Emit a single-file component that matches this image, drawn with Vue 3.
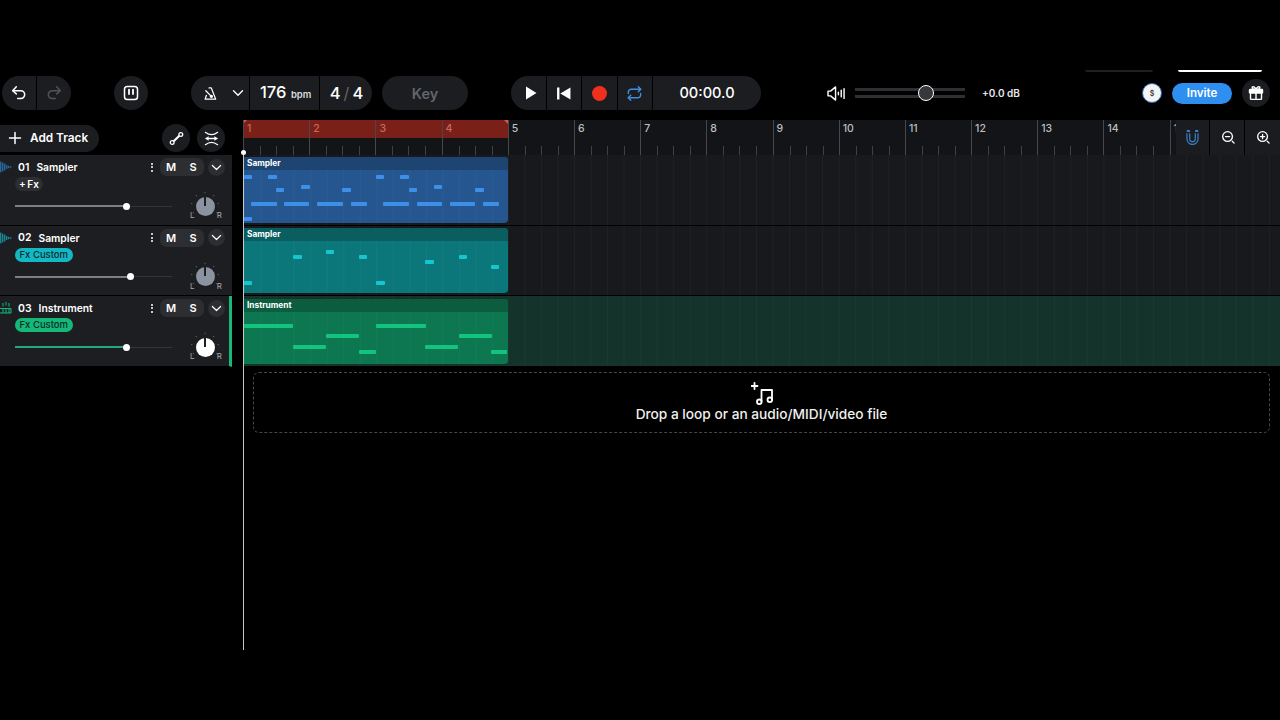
<script setup>
const BAR = 66.2

const bars = Array.from({ length: 16 }, (_, i) => i + 1)

const tracks = [
  {
    num: '01', name: 'Sampler', kind: 'wave', color: '#2f86d8', noteColor: '#3d8fe8', fx: '+ Fx', fxColor: '', level: 111,
    fill: '#7d7f84', knob: '#8b92a0', body: '#25568f', head: '#1e4572', lane: 'blue', top: 157.3,
    notes: [
      [243.5, 175, 8.5], [268, 175, 8.7], [376, 175, 8.3], [400, 175, 8.7],
      [301, 185, 8.5], [433.7, 185, 8.5],
      [275.7, 188, 8.5], [342.3, 188, 8.7], [408.7, 188, 8.8], [475, 188, 9],
      [251.3, 202, 25.4], [284.3, 202, 25], [317, 202, 26.3], [350.7, 202, 16.6],
      [383.3, 202, 25.7], [417, 202, 25.3], [450, 202, 25], [483, 202, 16.3],
      [243.5, 217, 8.2],
    ],
  },
  {
    num: '02', name: 'Sampler', kind: 'wave', color: '#1bb6c4', noteColor: '#16c6cf', fx: 'Fx Custom', fxColor: '#12b9c4', level: 115,
    fill: '#7d7f84', knob: '#8b92a0', body: '#0c777b', head: '#0b5e5f', lane: 'blue', top: 228,
    notes: [
      [325.7, 250, 8.6],
      [292.7, 255, 9], [358.7, 255, 8.6], [458.7, 255, 8.6],
      [425, 260, 8.7], [491.3, 265, 8],
      [243.5, 281, 8.2], [376, 281, 8.7],
    ],
  },
  {
    num: '03', name: 'Instrument', kind: 'piano', color: '#16b87a', noteColor: '#12c47e', fx: 'Fx Custom', fxColor: '#14b877', level: 111,
    fill: '#24a878', knob: '#ffffff', body: '#0d7752', head: '#0c5c40', lane: 'green', top: 298.7, active: true,
    notes: [
      [243.5, 324, 49.2], [376, 324, 49.7],
      [325.7, 334.5, 33], [458.7, 334.5, 33],
      [292.7, 345, 33], [425, 345, 32.7],
      [358.7, 350, 17.3], [491.3, 350, 16],
    ],
  },
]

// each note is [page x, page y, width]; the clip's left edge sits at x=244
function noteStyle(n, t) {
  return { left: n[0] - 244 + 'px', top: n[1] - t.top + 'px', width: n[2] + 'px', background: t.noteColor }
}

// dial marks round the pan knob
const dialTicks = [-120, -80, -40, 0, 40, 80, 120]
</script>

<template>
  <div class="page">
    <div class="top-mark top-mark--dim"></div>
    <div class="top-mark top-mark--white"></div>

    <header class="toolbar">
      <div class="pill undo">
        <button class="seg seg--undo">
          <svg viewBox="0 0 20 20" width="18" height="18" fill="none" stroke="#fff" stroke-width="1.7" stroke-linecap="round" stroke-linejoin="round"><path d="M7 3 3 7.500l4 3.500" /><path d="M3.500 7.500h8.500a4.300 4.300 0 0 1 0 8.600H8.500" /></svg>
        </button>
        <button class="seg seg--redo">
          <svg viewBox="0 0 20 20" width="18" height="18" fill="none" stroke="#505357" stroke-width="1.7" stroke-linecap="round" stroke-linejoin="round"><path d="M13 3l4 4.500-4 3.500" /><path d="M16.500 7.500H8a4.300 4.300 0 0 0 0 8.600h3.500" /></svg>
        </button>
      </div>

      <button class="round pause">
        <svg viewBox="0 0 16 16" width="16" height="16" fill="none" stroke="#fff" stroke-width="1.500"><rect x="1.500" y="1.500" width="13" height="13" rx="2.800" /><path d="M6 4.600v4.400M10 4.600v4.400" stroke-width="1.800" stroke-linecap="round" /></svg>
      </button>

      <div class="pill tempo">
        <div class="tempo__metro">
          <svg viewBox="0 0 16 16" width="15" height="15" fill="none" stroke="#fff" stroke-width="1.400" stroke-linejoin="round" stroke-linecap="round"><path d="M6.500 2h2.300l4.700 12H2.300l1.300-4" /><path d="M8.400 10.500 3 5" /><circle cx="8.900" cy="11" r="1.100" fill="#fff" /></svg>
          <svg viewBox="0 0 12 12" width="12" height="12" fill="none" stroke="#fff" stroke-width="1.400" stroke-linecap="round" stroke-linejoin="round"><path d="M1.500 3.800 6 8.200l4.500-4.400" /></svg>
        </div>
        <div class="tempo__bpm"><span class="big">176</span> <span class="bpm">bpm</span></div>
        <div class="tempo__sig"><span class="big">4</span><span class="slash">/</span><span class="big">4</span></div>
      </div>

      <div class="pill key">Key</div>

      <div class="pill transport">
        <button class="seg seg--t">
          <svg viewBox="0 0 14 14" width="14" height="14" fill="#fff"><path d="M2 .500v13l10.500-6.500z" /></svg>
        </button>
        <button class="seg seg--t">
          <svg viewBox="0 0 14 14" width="15" height="15" fill="#fff"><path d="M1 1.500h2.200v11H1zM13.500 1.500v11L4 7z" /></svg>
        </button>
        <button class="seg seg--t">
          <span class="rec"></span>
        </button>
        <button class="seg seg--t">
          <svg viewBox="0 0 18 18" width="17" height="17" fill="none" stroke="#3f8fe0" stroke-width="1.500" stroke-linecap="round" stroke-linejoin="round"><path d="M2.500 9V7.500a3 3 0 0 1 3-3h10" /><path d="M13 1.800l2.600 2.700L13 7.200" /><path d="M15.500 9v1.500a3 3 0 0 1-3 3h-10" /><path d="M5 10.800l-2.600 2.700L5 16.200" /></svg>
        </button>
        <div class="clock">00:00.0</div>
      </div>

      <div class="volume">
        <svg viewBox="0 0 20 18" width="19" height="17" fill="none" stroke="#fff" stroke-width="1.500" stroke-linejoin="round" stroke-linecap="round"><path d="M1 6.500h2.800L9 2v14l-5.200-4.500H1z" /><path d="M12 7.600v2.800M15 5.500v7M18 3.800v10.400" /></svg>
        <div class="volume__slider"><span class="volume__thumb"></span></div>
        <span class="volume__db">+0.0 dB</span>
      </div>

      <div class="account">
        <span class="avatar"><span>$</span></span>
        <button class="invite">Invite</button>
        <button class="round gift">
          <svg viewBox="0 0 16 16" width="16" height="16" fill="none" stroke="#fff" stroke-width="1.400" stroke-linejoin="round"><rect x="1.500" y="4.500" width="13" height="3.500" rx=".6" fill="#fff" /><path d="M2.500 8v5.600a.8.8 0 0 0 .8.8h9.400a.8.8 0 0 0 .8-.8V8M8 8v6.400" /><path d="M8 4.500C6.800 1.800 4.800 1.200 4.200 2.200 3.600 3.400 5.600 4.500 8 4.500zM8 4.500c1.200-2.700 3.200-3.300 3.800-2.300.6 1.200-1.400 2.300-3.800 2.300z" /></svg>
        </button>
      </div>
    </header>

    <div class="arrange">
      <div class="head-bar">
        <button class="add-track">
          <svg viewBox="0 0 14 14" width="14" height="14" fill="none" stroke="#fff" stroke-width="1.500" stroke-linecap="round"><path d="M7 1.500v11M1.500 7h11" /></svg>
          Add Track
        </button>
        <button class="round round--sm">
          <svg viewBox="0 0 16 16" width="15" height="15" fill="none" stroke="#fff" stroke-width="1.400"><circle cx="3.400" cy="12.300" r="2" /><circle cx="12.600" cy="3.700" r="2" /><path d="M5 11 11 5" stroke-width="2.200" /></svg>
        </button>
        <button class="round round--sm">
          <svg viewBox="0 0 18 18" width="17" height="17" fill="none" stroke="#fff" stroke-width="1.300" stroke-linecap="round"><path d="M2.500 2.500Q9 7.500 15.500 2.500M2.500 15.500Q9 10.500 15.500 15.500" /><path d="M6 9h6" stroke-width="1.500" /><path d="M2 9l4-2.500v5zM16 9l-4-2.500v5z" fill="#fff" stroke="none" /></svg>
        </button>
      </div>

      <div class="ruler">
        <div class="ruler__loop"></div>
        <div v-for="b in bars" :key="b" class="ruler__bar" :class="{ 'ruler__bar--loop': b <= 4 }" :style="{ width: BAR + 'px' }">
          <span class="ruler__num">{{ b }}</span>
        </div>
        <div class="ruler__tools">
          <button class="ruler__tool">
            <svg viewBox="0 0 14 16" width="13" height="15" fill="none" stroke="#3a7fc8" stroke-width="1.300"><path d="M.8 1h3.400M9.800 1h3.400" stroke-width="2" /><path d="M1 3.500v6a6 6 0 0 0 12 0v-6M4 3.500v6a3 3 0 0 0 6 0v-6" /></svg>
          </button>
          <button class="ruler__tool ruler__tool--zoom">
            <svg viewBox="0 0 16 16" width="15" height="15" fill="none" stroke="#fff" stroke-width="1.400" stroke-linecap="round"><circle cx="7" cy="7" r="5.200" /><path d="M4.800 7h4.400M12 12l2 2" /></svg>
          </button>
          <button class="ruler__tool ruler__tool--zoom">
            <svg viewBox="0 0 16 16" width="15" height="15" fill="none" stroke="#fff" stroke-width="1.400" stroke-linecap="round"><circle cx="7" cy="7" r="5.200" /><path d="M4.800 7h4.400M7 4.800v4.400M12 12l2 2" /></svg>
          </button>
        </div>
      </div>

      <template v-for="t in tracks" :key="t.num">
        <div class="track" :class="{ 'track--active': t.active }">
          <div class="track__top">
            <svg v-if="t.kind === 'wave'" class="track__icon" viewBox="0 0 12 12" width="12" height="12" fill="none" :stroke="t.color" stroke-width="1" stroke-linecap="round"><path d="M.8 1v10M2.800 2v8M4.800 3v6M6.800 4.500v3M8.800 5.200v1.600M10.800 5.700v.6" /></svg>
            <svg v-else class="track__icon track__icon--piano" viewBox="0 0 12 12" width="12" height="12" fill="none" :stroke="t.color" stroke-width="1"><path d="M0 6.500h11v4.500H0M3 6.500V11M6 6.500V11M9 6.500V11M3 1v3.500M6 0v3.500M9 1v3.500" /></svg>
            <span class="track__num">{{ t.num }}</span>
            <span class="track__name">{{ t.name }}</span>
            <span class="track__more"><i></i><i></i><i></i></span>
            <span class="track__ms"><b>M</b><b>S</b></span>
            <span class="track__open">
              <svg viewBox="0 0 12 12" width="11" height="11" fill="none" stroke="#fff" stroke-width="1.300" stroke-linecap="round" stroke-linejoin="round"><path d="M1.500 3.800 6 8.200l4.500-4.400" /></svg>
            </span>
          </div>
          <div class="track__fx">
            <span class="fx" :class="{ 'fx--on': t.fxColor }" :style="t.fxColor ? { background: t.fxColor } : {}">{{ t.fx }}</span>
          </div>
          <div class="track__mix">
            <div class="fader">
              <span class="fader__fill" :style="{ width: t.level + 'px', background: t.fill }"></span>
              <span class="fader__thumb" :style="{ left: t.level + 'px' }"></span>
            </div>
            <div class="knob">
              <svg class="knob__ticks" viewBox="0 0 30 30" width="30" height="30" stroke="#5c5f63" stroke-width="1">
                <path v-for="d in dialTicks" :key="d" d="M15 .800v1.400" :transform="`rotate(${d} 15 15)`" />
              </svg>
              <span class="knob__cap" :style="{ background: t.knob }"></span>
              <span class="knob__l">L</span>
              <span class="knob__r">R</span>
            </div>
          </div>
        </div>

        <div class="lane" :class="'lane--' + t.lane">
          <div class="clip" :style="{ backgroundColor: t.body }">
            <div class="clip__head" :style="{ background: t.head }">{{ t.name }}</div>
            <span v-for="(n, k) in t.notes" :key="k" class="note" :style="noteStyle(n, t)"></span>
          </div>
        </div>
      </template>

      <div class="head-rest"></div>
      <div class="drop">
        <svg viewBox="0 0 24 24" width="24" height="24" fill="none" stroke="#fff" stroke-width="1.800" stroke-linecap="round" stroke-linejoin="round"><path d="M3.500 1v6M.5 4h6" /><path d="M10.500 19.500V8h10.500v9.500" /><circle cx="8.300" cy="19.800" r="2.300" /><circle cx="18.800" cy="17.800" r="2.300" /></svg>
        <span>Drop a loop or an audio/MIDI/video file</span>
      </div>
    </div>

    <div class="playhead"></div>
  </div>
</template>

<style>
html, body { background: #000; }
</style>

<style scoped>
.page {
  position: relative;
  width: 1280px;
  height: 720px;
  overflow: hidden;
  background: #000;
  color: #fff;
  font-family: Inter, "Liberation Sans", sans-serif;
  padding-top: 76px;
  box-sizing: border-box;
}

button {
  border: 0;
  padding: 0;
  background: none;
  color: inherit;
  font: inherit;
}

.top-mark {
  position: absolute;
  top: 70px;
  height: 2px;
  border-radius: 0 0 6px 6px;
}
.top-mark--dim { left: 1085px; width: 68px; background: #1c1f24; }
.top-mark--white { left: 1178px; width: 84px; background: #fff; }

.toolbar {
  display: flex;
  align-items: center;
  height: 34px;
  padding-left: 2px;
}

.pill {
  display: flex;
  align-items: center;
  height: 34px;
  background: #1b1d20;
  border-radius: 17px;
}

.round {
  display: flex;
  align-items: center;
  justify-content: center;
  width: 34px;
  height: 34px;
  border-radius: 50%;
  background: #1b1d20;
}
.round--sm { width: 28px; height: 28px; }

.seg {
  display: flex;
  align-items: center;
  justify-content: center;
  height: 34px;
}

.undo { width: 69px; }
.seg--undo { width: 35px; border-right: 1px solid #000; }
.seg--redo { flex: 1; }
.pause { margin-left: 43px; }

.tempo { margin-left: 43px; width: 181px; }
.tempo__metro {
  display: flex;
  align-items: center;
  justify-content: space-between;
  box-sizing: border-box;
  width: 59px;
  height: 34px;
  padding: 0 5px 0 12px;
  border-right: 1px solid #000;
}
.tempo__bpm {
  box-sizing: border-box;
  width: 70px;
  padding-left: 10px;
  line-height: 34px;
  white-space: nowrap;
  border-right: 1px solid #000;
}
.tempo__sig {
  flex: 1;
  display: flex;
  justify-content: center;
  gap: 3px;
  padding-left: 1px;
  line-height: 34px;
}
.big { font-size: 16.500px; font-weight: 500; }
.bpm { font-size: 9.500px; font-weight: 600; color: #ddd; }
.slash { font-size: 16px; color: #666; }

.key {
  margin-left: 10px;
  width: 86px;
  justify-content: center;
  font-size: 14.500px;
  font-weight: 600;
  color: #63666a;
}

.transport { margin-left: 43px; width: 250px; }
.seg--t {
  box-sizing: border-box;
  width: 35.500px;
  border-right: 1px solid #000;
}
.seg--t:first-child { padding-left: 6px; }
.rec {
  width: 15px;
  height: 15px;
  border-radius: 50%;
  background: #f0301e;
}
.clock {
  flex: 1;
  text-align: center;
  font-size: 14.600px;
  font-weight: 500;
}

.volume {
  display: flex;
  align-items: center;
  margin-left: 66px;
}
.volume__slider {
  position: relative;
  width: 110px;
  height: 10px;
  margin-left: 9px;
  border-top: 3px solid #2e3033;
  border-bottom: 3px solid #2e3033;
  box-sizing: border-box;
}
.volume__thumb {
  position: absolute;
  left: 63px;
  top: -6px;
  width: 14px;
  height: 14px;
  box-sizing: content-box;
  border: 1.500px solid #fff;
  border-radius: 50%;
  background: #36383b;
}
.volume__db {
  margin-left: 17px;
  font-size: 10px;
  font-weight: 600;
  color: #e8e8e8;
}

.account {
  display: flex;
  align-items: center;
  margin-left: auto;
  padding-right: 10px;
}
.avatar {
  display: flex;
  align-items: center;
  justify-content: center;
  box-sizing: border-box;
  width: 20px;
  height: 20px;
  border: 1.500px solid #2a66b4;
  border-radius: 50%;
  background: #f4f4f4;
  color: #444;
  font-size: 7px;
  font-weight: 600;
}
.invite {
  width: 60px;
  height: 21px;
  margin-left: 10px;
  border-radius: 11px;
  background: #2f8ff0;
  font-size: 11.500px;
  font-weight: 600;
}
.gift { width: 28px; height: 28px; margin-left: 10px; }

.arrange {
  display: grid;
  grid-template-columns: 232px 1fr;
  column-gap: 11px;
  grid-template-rows: 35px 70.700px 70.700px 70.600px auto;
  margin-top: 10px;
}

.head-bar {
  display: flex;
  align-items: center;
  gap: 7px;
  padding-top: 1px;
  padding-right: 7px;
  box-sizing: border-box;
}
.add-track {
  display: flex;
  align-items: center;
  gap: 8px;
  width: 99px;
  height: 27px;
  margin-right: auto;
  padding-left: 8px;
  box-sizing: border-box;
  border-radius: 0 14px 14px 0;
  background: #1b1d20;
  font-size: 11.800px;
  font-weight: 600;
}

.ruler {
  position: relative;
  display: flex;
  overflow: hidden;
  background: #121417;
}
.ruler__bar {
  position: relative;
  flex: none;
  box-sizing: border-box;
  border-left: 1px solid #45474b;
  background: repeating-linear-gradient(90deg, transparent 0 15.550px, #3f4145 15.550px 16.550px) 0 26px / 50px 9px no-repeat;
}
.ruler__num {
  display: block;
  padding: 2px 0 0 3px;
  font-size: 10.500px;
  font-weight: 500;
  color: #bdbfc2;
}
.ruler__bar--loop .ruler__num { color: #c9685e; }
.ruler__loop {
  position: absolute;
  left: 0;
  top: 0;
  width: 265px;
  height: 18px;
  background: #7b2018;
}
.ruler__loop::before,
.ruler__loop::after {
  content: '';
  position: absolute;
  top: 0;
  border-top: 4px solid #d8574a;
}
.ruler__loop::before { left: 0; border-right: 4px solid transparent; }
.ruler__loop::after { right: 0; border-left: 4px solid transparent; }
.ruler__tools {
  position: absolute;
  right: 0;
  top: 0;
  display: flex;
  height: 35px;
  background: #1a1c20;
}
.ruler__tool {
  display: flex;
  align-items: center;
  justify-content: center;
  width: 35px;
  border-right: 1px solid #000;
}
.ruler__tool:first-child { width: 34px; }
.ruler__tool:last-child { border-right: 0; }
.ruler__tool--zoom svg { margin-left: 2px; }

.track {
  position: relative;
  box-sizing: border-box;
  padding: 3px 7px 0 0;
  background: #1c1e22;
  border-bottom: 1px solid #000;
}
.track--active { border-right: 3px solid #18b87a; padding-right: 4px; }

.track__top {
  display: flex;
  align-items: center;
  height: 18px;
}
.track__icon { flex: none; margin-right: 6px; }
.track__icon--piano { margin-top: -1px; }
.track__num { font-size: 10.500px; font-weight: 600; }
.track__name { margin-left: 7px; font-size: 10.300px; font-weight: 600; }
.track__more {
  display: flex;
  flex-direction: column;
  gap: 1.500px;
  margin-left: auto;
  margin-right: 7px;
}
.track__more i {
  width: 2px;
  height: 2px;
  border-radius: 50%;
  background: #fff;
}
.track__ms {
  display: flex;
  width: 44px;
  height: 18px;
  border-radius: 7px;
  background: #2c2e32;
  font-size: 11px;
  line-height: 18px;
  text-align: center;
}
.track__ms b { flex: 1; font-weight: 600; }
.track__open {
  display: flex;
  align-items: center;
  justify-content: center;
  width: 17px;
  height: 17px;
  margin-left: 4px;
  border-radius: 50%;
  background: #2c2e32;
}

.track__fx { display: flex; padding: 1px 0 0 15px; }
.fx {
  height: 14px;
  padding: 0 4px;
  border-radius: 7px;
  background: #2c2e32;
  font-size: 10px;
  font-weight: 600;
  line-height: 14px;
  word-spacing: -1px;
}
.fx--on {
  padding: 0 4.500px;
  font-size: 9.500px;
  font-weight: 500;
  word-spacing: 0;
  color: #0e2b2e;
}

.track__mix {
  display: flex;
  align-items: center;
  justify-content: space-between;
  height: 26px;
  margin-top: 2px;
  padding-left: 15px;
}
.fader {
  position: relative;
  width: 157px;
  height: 1px;
  background: #33353a;
}
.fader__fill {
  position: absolute;
  left: 0;
  top: -.500px;
  height: 2px;
}
.fader__thumb {
  position: absolute;
  top: -3px;
  width: 7px;
  height: 7px;
  margin-left: -3px;
  border-radius: 50%;
  background: #fff;
}

.knob {
  position: relative;
  width: 30px;
  height: 26px;
  margin-right: 5px;
}
.knob__ticks {
  position: absolute;
  left: 0;
  top: -2px;
}
.knob__cap {
  position: absolute;
  left: 5.500px;
  top: 3.500px;
  width: 19px;
  height: 19px;
  border-radius: 50%;
}
.knob__cap::after {
  content: '';
  position: absolute;
  left: 8.700px;
  top: 0;
  width: 1.500px;
  height: 9px;
  background: #1c1e22;
}
.knob__l, .knob__r {
  position: absolute;
  bottom: -1px;
  font-size: 8px;
  color: #a8aaae;
}
.knob__l { left: 0; }
.knob__r { right: -2px; }

.lane {
  padding: 2.300px 0 0 1px;
  box-sizing: border-box;
  border-bottom: 1px solid #000;
  background-size: 16.550px 100%;
}
.lane--blue {
  background-color: #17191c;
  background-image: linear-gradient(90deg, #1f2225 0 1px, transparent 1px);
}
.lane--green {
  background-color: #14332a;
  background-image: linear-gradient(90deg, #1a3a30 0 1px, transparent 1px);
}

.clip {
  position: relative;
  width: 264px;
  height: 65.400px;
  overflow: hidden;
  border-radius: 0 4px 4px 0;
  background-image: linear-gradient(90deg, rgba(255, 255, 255, .03) 0 1px, transparent 1px);
  background-size: 16.550px 100%;
}
.clip__head {
  height: 13px;
  padding-left: 3px;
  font-size: 8.300px;
  font-weight: 700;
  line-height: 13px;
}
.note {
  position: absolute;
  height: 4px;
  border-radius: 1px;
}

.head-rest { background: #000; }
.drop {
  display: flex;
  flex-direction: column;
  align-items: center;
  box-sizing: border-box;
  height: 61px;
  margin: 5px 10px 0;
  padding-top: 9px;
  border: 1px dashed #45474b;
  border-radius: 6px;
  font-size: 13.700px;
  font-weight: 500;
  color: #f0f0f0;
}
.drop svg { margin-left: 2px; }

.playhead {
  position: absolute;
  left: 243px;
  top: 151px;
  width: 1px;
  height: 499px;
  background: #c8c8c8;
}
.playhead::before {
  content: '';
  position: absolute;
  left: -2px;
  top: -1px;
  width: 5px;
  height: 5px;
  border-radius: 50%;
  background: #fff;
}
</style>
